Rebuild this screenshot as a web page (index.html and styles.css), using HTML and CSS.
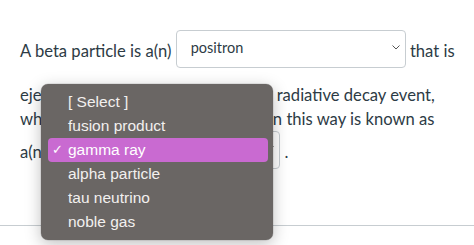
FILE: index.html
```html
<!DOCTYPE html>
<html>
<head>
<title>Quiz question</title>
<meta http-equiv="content-type" content="text/html; charset=utf8">
<link rel="stylesheet" href="styles.css">
</head>
<body>
    <div class="question">
        <p class="text">A beta particle is a(n) <span class="dropdown"><span class="value">positron</span><svg class="chevron" width="8" height="5" viewBox="0 0 8 5"><polyline points="0.5,0.5 4,4 7.5,0.5" /></svg></span> that is<br>
        ejected out of the nucleus during a radiative decay event,<br>
        which is driven out of the nucleus in this way is known as<br>
        a(n) <span class="dropdown"><span class="value">gamma ray</span><svg class="chevron" width="8" height="5" viewBox="0 0 8 5"><polyline points="0.5,0.5 4,4 7.5,0.5" /></svg></span> .</p>
    </div>
    <div class="divider"></div>

    <div class="menu">
        <div class="item">[ Select ]</div>
        <div class="item">fusion product</div>
        <div class="item selected"><span class="check">&#10003;</span>gamma ray</div>
        <div class="item">alpha particle</div>
        <div class="item">tau neutrino</div>
        <div class="item">noble gas</div>
    </div>
</body>
</html>
```

FILE: styles.css
```css
body {
    margin: 0;
    background: #fff;
    font-family: Lato, "Open Sans", sans-serif;
    color: #2d3b45;
    overflow: hidden;
}
.question {
    padding: 30px 0 0 20px;
    white-space: nowrap;
}
.text {
    margin: 0;
    font-size: 16.6px;
    line-height: 24px;
}
.dropdown {
    display: inline-block;
    position: relative;
    box-sizing: border-box;
    width: 230px;
    height: 38px;
    margin-bottom: 15px;
    padding: 0 14px;
    border: 1px solid #c7cdd1;
    border-radius: 4px;
    background: #fff;
    overflow: hidden;
    vertical-align: -26px;
    font-size: 14.5px;
    line-height: 34px;
}
.chevron {
    position: absolute;
    right: 5px;
    top: 14px;
    fill: none;
    stroke: #555;
    stroke-width: 1;
}
.divider {
    margin-top: 41px;
    border-top: 1px solid #c7cdd1;
}
.menu {
    position: absolute;
    left: 41px;
    top: 84px;
    width: 232px;
    box-sizing: border-box;
    padding: 6px 5px 6px 7px;
    background: #6a6664;
    border-radius: 7px;
    box-shadow: 0 4px 16px rgba(0,0,0,0.25), 0 0 0 0.5px rgba(0,0,0,0.15);
    font-family: "Liberation Sans", Arial, sans-serif;
    font-size: 15.5px;
    color: #f2f0ef;
}
.item {
    position: relative;
    height: 24px;
    line-height: 24px;
    padding-left: 20px;
    border-radius: 4px;
}
.selected {
    background: #c96ad1;
    color: #fff;
}
.check {
    position: absolute;
    left: 4px;
    top: 0;
    font-family: "DejaVu Sans", sans-serif;
    font-size: 13px;
}
```
